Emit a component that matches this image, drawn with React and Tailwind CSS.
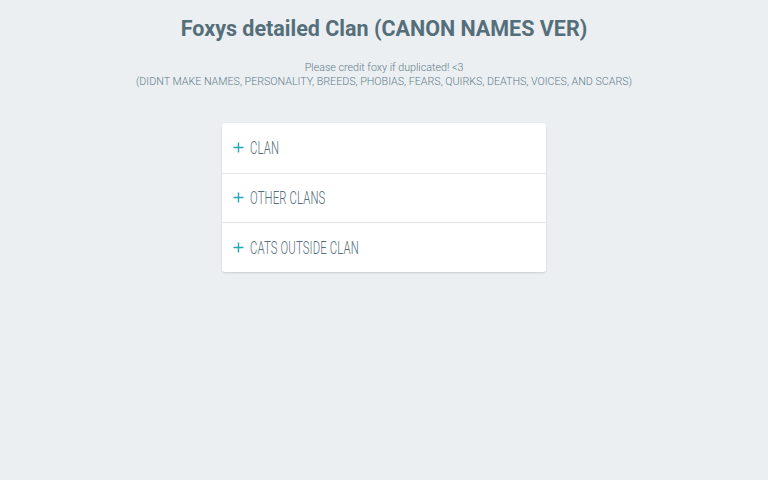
import { useState } from "react";

const sections = ["CLAN", "OTHER CLANS", "CATS OUTSIDE CLAN"];

export default function App() {
  const [open, setOpen] = useState(null);

  return (
    <div className="min-h-screen w-full bg-[#eceff1] font-['Roboto',sans-serif] text-[#546e7a]">
      <div className="flex flex-col items-center pt-[14px]">
        <h1 className="text-[21.5px] font-bold leading-[30px] text-[#546e7a]">
          Foxys detailed Clan (CANON NAMES VER)
        </h1>
        <div className="mt-[17px] text-center text-[10.7px] font-light leading-[14px] text-[#607d8b]">
          <p>Please credit foxy if duplicated! &lt;3</p>
          <p>(DIDNT MAKE NAMES, PERSONALITY, BREEDS, PHOBIAS, FEARS, QUIRKS, DEATHS, VOICES, AND SCARS)</p>
        </div>

        <div className="mt-[34px] w-[324px] rounded-[3px] bg-white shadow-[0_1px_2px_rgba(0,0,0,0.15)]">
          {sections.map((name, i) => (
            <button
              key={name}
              onClick={() => setOpen(open === i ? null : i)}
              className={`flex h-[49.5px] w-full items-center px-[11px] text-left ${
                i > 0 ? "border-t border-[#e3e6e8]" : ""
              }`}
            >
              <svg width="11" height="11" viewBox="0 0 11 11" className="shrink-0">
                <path d="M5.5 0.5v10M0.5 5.5h10" stroke="#26a4b8" strokeWidth="1.4" />
              </svg>
              <span className="ml-[6px] origin-left scale-x-[0.63] whitespace-nowrap text-[18px] font-light tracking-[0.2px] text-[#546e7a]">
                {name}
              </span>
            </button>
          ))}
        </div>
      </div>
    </div>
  );
}
